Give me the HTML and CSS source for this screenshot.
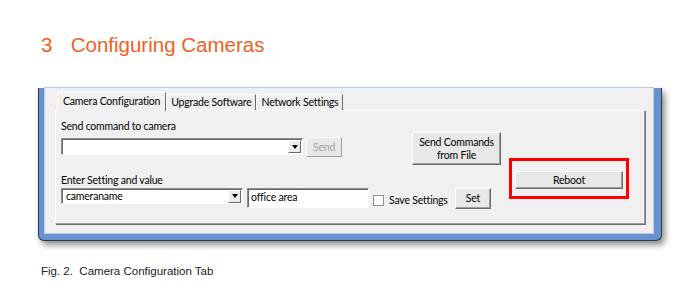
FILE: index.html
```html
<!DOCTYPE html>
<html>
<head>
<meta charset="utf-8">
<link rel="stylesheet" href="styles.css">
</head>
<body>
<h1 class="title"><span class="num">3</span>Configuring Cameras</h1>
<div class="window">
  <div class="client">
    <div class="tabs">
      <div class="tab active">Camera Configuration</div>
      <div class="tab">Upgrade Software</div>
      <div class="tab">Network Settings</div>
    </div>
    <div class="panel">
      <div class="main">
        <div class="block top">
          <div class="field">
            <div class="label">Send command to camera</div>
            <div class="row">
              <div class="combo wide"><span class="value"></span><span class="drop"></span></div>
              <button class="btn send" disabled>Send</button>
            </div>
          </div>
          <button class="btn file">Send Commands<br>from File</button>
        </div>
        <div class="block bottom">
          <div class="label">Enter Setting and value</div>
          <div class="row">
            <div class="combo narrow"><span class="value">cameraname</span><span class="drop"></span></div>
            <div class="textbox">office area</div>
            <span class="check"></span>
            <span class="check-label">Save Settings</span>
            <button class="btn set">Set</button>
          </div>
        </div>
      </div>
      <div class="side">
        <div class="highlight"><button class="btn reboot">Reboot</button></div>
      </div>
    </div>
  </div>
</div>
<p class="caption">Fig. 2.&nbsp; Camera Configuration Tab</p>
</body>
</html>
```
FILE: styles.css
```css
body {
  margin: 0;
  background: #fff;
  font-family: "Liberation Sans", Arial, sans-serif;
}
.title {
  margin: 33px 0 31px 41px;
  font-size: 20.5px;
  line-height: 24px;
  font-weight: normal;
  color: #f0601e;
}
.num {
  display: inline-block;
  width: 29.7px;
}
.window {
  margin-left: 38px;
  width: 624px;
  height: 153px;
  box-sizing: border-box;
  border: 1px solid #2c3a4c;
  border-top: 0;
  border-radius: 0 0 6px 6px;
  background: #6891cf;
  padding: 0 8px 7px 6px;
  box-shadow: 3px 4px 6px rgba(0, 0, 0, 0.45);
}
.client {
  height: 145px;
  box-sizing: border-box;
  background: #f0f0f0;
  padding: 4px 8px 0 10px;
  box-shadow: 0 0 0 1px #b9cce6;
  font-family: "Lato", "Liberation Sans", sans-serif;
  font-size: 10.5px;
  letter-spacing: -0.2px;
  color: #000;
}
.tabs {
  display: flex;
  align-items: flex-end;
  height: 18px;
  padding-left: 2px;
}
.tab {
  box-sizing: border-box;
  height: 16px;
  line-height: 14px;
  padding: 0 4px;
  border: 1px solid #a0a0a0;
  border-bottom: 0;
  border-right-color: #6a6a6a;
  border-left-color: #fff;
  border-top-color: #fff;
  background: #f0f0f0;
  white-space: nowrap;
}
.tab.active {
  height: 19px;
  margin-bottom: -1px;
  padding: 0 5px;
  line-height: 17px;
  position: relative;
  z-index: 1;
}
.panel {
  display: flex;
  height: 114px;
  box-sizing: border-box;
  border: 1px solid;
  border-color: #fff #a0a0a0 #a0a0a0 #fff;
  box-shadow: 1px 1px 0 #707070;
  padding: 0 0 0 5px;
}
.main {
  width: 440px;
  display: flex;
  flex-direction: column;
}
.block.top {
  display: flex;
  align-items: flex-start;
  margin-top: 8px;
}
.label {
  height: 14px;
  line-height: 14px;
  white-space: nowrap;
}
.row {
  display: flex;
  align-items: flex-start;
  margin-top: 4px;
}
.block.bottom {
  margin-top: 8px;
}
.block.bottom .row {
  margin-top: 1px;
}
.combo {
  box-sizing: border-box;
  display: flex;
  align-items: center;
  background: #fff;
  border: 1px solid;
  border-color: #8e8e8e #fff #fff #8e8e8e;
  box-shadow: inset 1px 1px 0 #6a6a6a;
  padding: 1px 1px 1px 4px;
}
.combo.wide {
  width: 242px;
  height: 17px;
  margin-top: 1px;
}
.combo.narrow {
  width: 182px;
  height: 16px;
}
.value {
  flex: 1;
  white-space: nowrap;
}
.drop {
  width: 13px;
  height: 13px;
  box-sizing: border-box;
  background: #ececec;
  border: 1px solid;
  border-color: #fff #6a6a6a #6a6a6a #fff;
  display: flex;
  align-items: center;
  justify-content: center;
}
.drop::before {
  content: "";
  border-left: 3.5px solid transparent;
  border-right: 3.5px solid transparent;
  border-top: 4px solid #000;
}
.btn {
  font: inherit;
  letter-spacing: inherit;
  color: #000;
  box-sizing: border-box;
  background: #e8e8e8;
  border: 1px solid;
  border-color: #fff #6a6a6a #6a6a6a #fff;
  box-shadow: inset -1px -1px 0 #a0a0a0;
  padding: 0;
  line-height: 13px;
}
.btn.send {
  margin-left: 3px;
  width: 36px;
  height: 20px;
  color: #a5a5a5;
  border-color: #fff #a0a0a0 #a0a0a0 #fff;
  box-shadow: none;
}
.btn.file {
  margin-left: auto;
  margin-top: 13px;
  width: 89px;
  height: 33px;
}
.textbox {
  box-sizing: border-box;
  margin-left: 4px;
  width: 122px;
  height: 20px;
  line-height: 17px;
  padding-left: 3px;
  background: #fff;
  border: 1px solid;
  border-color: #8e8e8e #fff #fff #8e8e8e;
  box-shadow: inset 1px 1px 0 #6a6a6a;
}
.check {
  margin: 7px 0 0 4px;
  width: 11px;
  height: 11px;
  box-sizing: border-box;
  background: #fff;
  border: 1px solid #8e8e8e;
}
.check-label {
  margin: 5px 0 0 5px;
  width: 61px;
  line-height: 14px;
  white-space: nowrap;
}
.btn.set {
  margin-left: 5px;
  width: 36px;
  height: 21px;
}
.side {
  flex: none;
}
.highlight {
  margin: 47px 0 0 8px;
  width: 120px;
  height: 41px;
  box-sizing: border-box;
  border: 3px solid #f00;
  padding: 10px 0 0 3px;
}
.btn.reboot {
  display: block;
  width: 108px;
  height: 18px;
}
.caption {
  margin: 23px 0 0 41px;
  font-size: 11.5px;
  line-height: 14px;
  color: #222;
}
```
